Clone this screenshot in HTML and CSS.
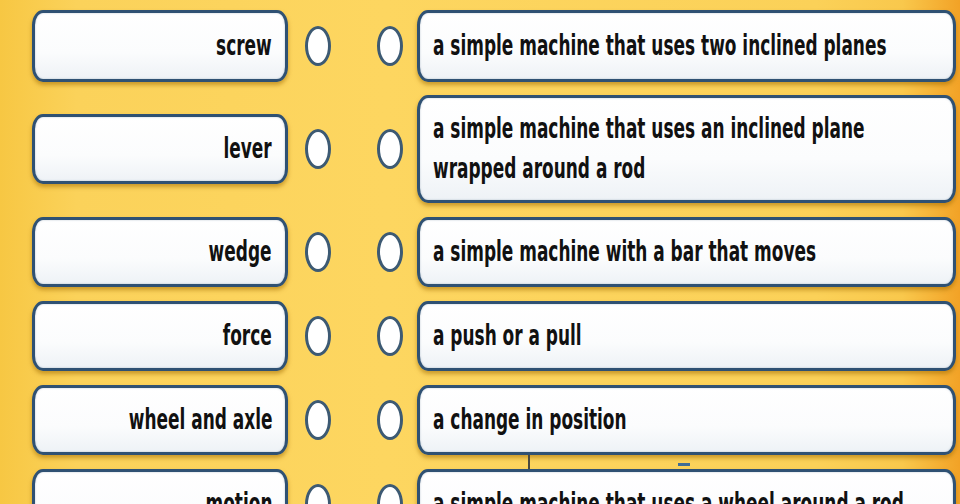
FILE: index.html
```html
<!DOCTYPE html>
<html lang="en">
<head>
    <meta charset="UTF-8">
    <meta name="viewport" content="width=device-width, initial-scale=1.0">
    <title>Simple Machines - Matching</title>
    <link rel="stylesheet" href="styles.css">
</head>
<body>
    <div id="board">
        <div class="row">
            <div class="term"><span class="label">screw</span></div>
            <span class="dot"></span>
            <span class="dot second"></span>
            <div class="definition"><span class="label">a simple machine that uses two inclined planes</span></div>
        </div>
        <div class="row">
            <div class="term"><span class="label">lever</span></div>
            <span class="dot"></span>
            <span class="dot second"></span>
            <div class="definition"><span class="label">a simple machine that uses an inclined plane wrapped around a rod</span></div>
        </div>
        <div class="row">
            <div class="term"><span class="label">wedge</span></div>
            <span class="dot"></span>
            <span class="dot second"></span>
            <div class="definition"><span class="label">a simple machine with a bar that moves</span></div>
        </div>
        <div class="row">
            <div class="term"><span class="label">force</span></div>
            <span class="dot"></span>
            <span class="dot second"></span>
            <div class="definition"><span class="label">a push or a pull</span></div>
        </div>
        <div class="row">
            <div class="term"><span class="label">wheel and axle</span></div>
            <span class="dot"></span>
            <span class="dot second"></span>
            <div class="definition"><span class="label">a change in position</span></div>
            <!-- leftover marks from the drag lines -->
            <span class="tick"></span>
            <span class="nub"></span>
        </div>
        <div class="row">
            <div class="term"><span class="label">motion</span></div>
            <span class="dot"></span>
            <span class="dot second"></span>
            <div class="definition"><span class="label">a simple machine that uses a wheel around a rod</span></div>
        </div>
    </div>
</body>
</html>
```

FILE: styles.css
```css
body {
    margin: 0;
    height: 504px;
    overflow: hidden;
    font-family: "DejaVu Sans Condensed", "DejaVu Sans", sans-serif;
    font-stretch: condensed;
    font-weight: bold;
    color: #111;
    background: linear-gradient(90deg, #f7c743 0%, #fbd25a 8%, #fdd660 40%, #fbd158 85%, #f9c84c 94%, #f2a226 100%);
}
#board {
    display: flex;
    flex-direction: column;
    gap: 14px;
    padding-top: 10px;
}
.row {
    position: relative;
    display: flex;
    align-items: center;
    padding-left: 32px;
}
.row:first-child {
    margin-bottom: -1px;
}
.term,
.definition {
    box-sizing: border-box;
    flex: none;
    min-height: 70px;
    padding: 11px 16px;
    display: flex;
    align-items: center;
    background: linear-gradient(#ffffff, #fbfcfd 60%, #eef2f6);
    border: 3px solid #2f5173;
    border-radius: 11px / 15px;
    box-shadow: 0 3px 4px rgba(160, 105, 0, 0.55), inset 0 0 2px rgba(47, 81, 115, 0.35);
    font-size: 28px;
    line-height: 40px;
}
.row:first-child .term,
.row:first-child .definition {
    min-height: 72px;
}
.term {
    width: 256px;
    justify-content: flex-end;
    padding-right: 13px;
}
.definition {
    width: 539px;
    margin-left: 14px;
    padding-left: 13px;
}
/* the quiz font is drawn narrow, so squeeze the glyphs sideways */
.label {
    display: inline-block;
    flex: none;
    white-space: nowrap;
    transform: scaleX(0.673);
}
.term .label {
    transform-origin: right center;
}
.definition .label {
    transform-origin: left center;
    white-space: normal;
    width: 749px;
}
.dot {
    box-sizing: border-box;
    flex: none;
    width: 26px;
    height: 40px;
    margin-left: 17px;
    border: 3px solid #3d5a73;
    border-radius: 50%;
    background: #fff;
}
.dot.second {
    margin-left: 46px;
}
.tick {
    position: absolute;
    left: 528px;
    bottom: -14px;
    width: 2px;
    height: 14px;
    background: #4a4a40;
}
.nub {
    position: absolute;
    left: 678px;
    bottom: -11px;
    width: 12px;
    height: 3px;
    background: #3f6d96;
}
```
